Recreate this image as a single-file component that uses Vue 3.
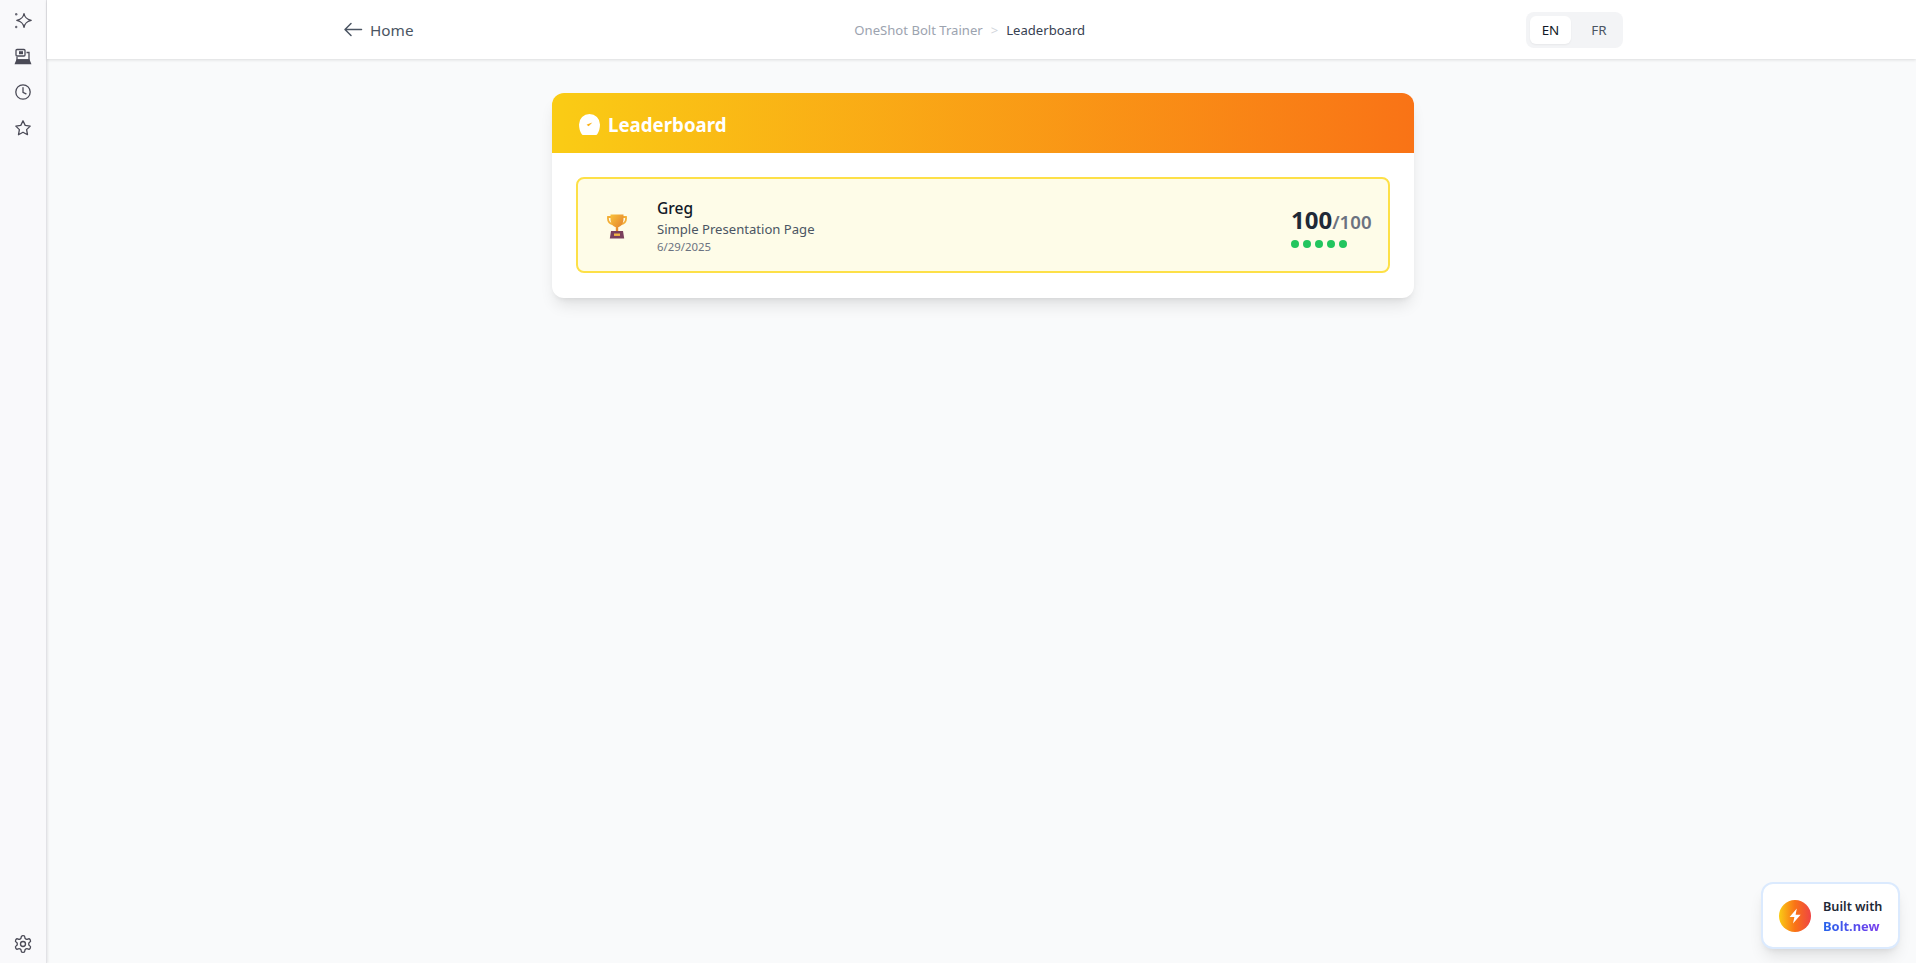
<template>
  <div class="page">
    <aside class="sidebar">
      <div class="side-top">
        <svg class="side-icon" viewBox="0 0 20 20" fill="none" stroke="#4b4b57" stroke-width="1.3" stroke-linejoin="round">
          <path d="M11 2.6 C11.8 6.6 13.4 8.2 18.2 9.4 C13.4 10.6 11.8 12.2 11 16.4 C10.2 12.2 8.6 10.6 3.8 9.4 C8.6 8.2 10.2 6.6 11 2.6Z" />
          <circle cx="3.2" cy="3.2" r="1.2" fill="#6b6b76" stroke="none" />
          <circle cx="3.2" cy="16" r="1.2" fill="#6b6b76" stroke="none" />
        </svg>
        <svg class="side-icon" viewBox="0 0 20 20" fill="none" stroke="#4b4b57" stroke-width="1.3">
          <rect x="3" y="2.5" width="9" height="6.5" rx="1" />
          <rect x="6" y="4.2" width="4" height="3" fill="#4b4b57" stroke="none" />
          <path d="M13.5 5.5H16V13H4V10" />
          <path d="M2.5 16.5L4 13H16L17.5 16.5Z" fill="#4b4b57" />
        </svg>
        <svg class="side-icon" viewBox="0 0 20 20" fill="none" stroke="#4b4b57" stroke-width="1.3" stroke-linecap="round">
          <circle cx="10" cy="10" r="7.2" />
          <path d="M10 5.6V10.4L13 11.8" />
        </svg>
        <svg class="side-icon" viewBox="0 0 20 20" fill="none" stroke="#4b4b57" stroke-width="1.3" stroke-linejoin="round">
          <path d="M10 2.8L12.2 7.4L17.2 8.1L13.6 11.6L14.5 16.7L10 14.2L5.5 16.7L6.4 11.6L2.8 8.1L7.8 7.4Z" />
        </svg>
      </div>
      <svg class="side-icon" viewBox="0 0 24 24" fill="none" stroke="#4b4b57" stroke-width="1.6" stroke-linejoin="round">
        <path d="M12.22 2h-.44a2 2 0 0 0-2 2v.18a2 2 0 0 1-1 1.73l-.43.25a2 2 0 0 1-2 0l-.15-.08a2 2 0 0 0-2.73.73l-.22.38a2 2 0 0 0 .73 2.73l.15.1a2 2 0 0 1 1 1.72v.51a2 2 0 0 1-1 1.74l-.15.09a2 2 0 0 0-.73 2.73l.22.38a2 2 0 0 0 2.73.73l.15-.08a2 2 0 0 1 2 0l.43.25a2 2 0 0 1 1 1.73V20a2 2 0 0 0 2 2h.44a2 2 0 0 0 2-2v-.18a2 2 0 0 1 1-1.73l.43-.25a2 2 0 0 1 2 0l.15.08a2 2 0 0 0 2.73-.73l.22-.39a2 2 0 0 0-.73-2.73l-.15-.08a2 2 0 0 1-1-1.74v-.5a2 2 0 0 1 1-1.74l.15-.09a2 2 0 0 0 .73-2.73l-.22-.38a2 2 0 0 0-2.73-.73l-.15.08a2 2 0 0 1-2 0l-.43-.25a2 2 0 0 1-1-1.73V4a2 2 0 0 0-2-2z" />
        <circle cx="12" cy="12" r="3" />
      </svg>
    </aside>

    <div class="main">
      <header class="topbar">
        <div class="topbar-inner">
          <a class="home">
            <svg class="arrow" viewBox="0 0 20 20" fill="none" stroke="#4b5563" stroke-width="1.5" stroke-linecap="round" stroke-linejoin="round">
              <path d="M8 3.5L2 9.5L8 15.5M2.5 9.5H18.5" />
            </svg>
            <span>Home</span>
          </a>
          <nav class="crumbs">
            <span class="crumb-muted">OneShot Bolt Trainer</span>
            <span class="crumb-sep">&gt;</span>
            <span class="crumb-current">Leaderboard</span>
          </nav>
          <div class="lang">
            <button class="lang-btn active">EN</button>
            <button class="lang-btn">FR</button>
          </div>
        </div>
      </header>

      <main class="content">
        <section class="card">
          <div class="card-head">
            <svg class="head-icon" viewBox="0 0 21 21">
              <path d="M10.5 0A10.5 10.5 0 0 1 21 10.5C21 14 20 17.6 18.4 20A2 2 0 0 1 17 21H4A2 2 0 0 1 2.6 20C1 17.6 0 14 0 10.5A10.5 10.5 0 0 1 10.5 0Z" fill="#fff" />
              <path d="M7.6 10.8L9.6 12.2L13.4 8.4L9.2 10Z" fill="#fbb016" />
            </svg>
            <h2>Leaderboard</h2>
          </div>
          <div class="card-body">
            <div v-for="e in entries" :key="e.name" class="entry">
              <div class="entry-left">
                <svg class="trophy" viewBox="0 0 20 25">
                  <defs>
                    <linearGradient id="cup" x1="0" y1="0" x2="1" y2="1">
                      <stop offset="0" stop-color="#f9c23c" />
                      <stop offset="1" stop-color="#e0782a" />
                    </linearGradient>
                  </defs>
                  <path d="M4 3H1C0.6 6.5 2 9.5 6 10.5M16 3H19C19.4 6.5 18 9.5 14 10.5" fill="none" stroke="#f3ae36" stroke-width="1.8" />
                  <path d="M3.5 0.5H16.5V5C16.5 9.5 14 12.5 11.2 13.2V17H8.8V13.2C6 12.5 3.5 9.5 3.5 5Z" fill="url(#cup)" />
                  <path d="M4 17H16L17.2 24.5H2.8Z" fill="#7b3f5c" />
                  <rect x="7" y="19.5" width="6" height="2.4" fill="#f4b544" />
                </svg>
                <div class="entry-text">
                  <div class="entry-name">{{ e.name }}</div>
                  <div class="entry-title">{{ e.title }}</div>
                  <div class="entry-date">{{ e.date }}</div>
                </div>
              </div>
              <div class="entry-score">
                <div class="score"><span class="score-num">{{ e.score }}</span><span class="score-max">/100</span></div>
                <div class="dots">
                  <span v-for="n in 5" :key="n" class="dot"></span>
                </div>
              </div>
            </div>
          </div>
        </section>
      </main>
    </div>

    <div class="bolt-badge">
      <span class="bolt-logo">
        <svg viewBox="0 0 20 20" width="20" height="20">
          <path d="M11.8 2.4L4.6 11H9.4L8 17.6L15.6 8.8H10.6Z" fill="#fff" />
        </svg>
      </span>
      <div class="bolt-text">
        <div class="bolt-line">Built with</div>
        <div class="bolt-name">Bolt.new</div>
      </div>
    </div>
  </div>
</template>

<script setup>
const entries = [
  { name: 'Greg', title: 'Simple Presentation Page', date: '6/29/2025', score: 100 }
]
</script>

<style>
html, body {
  margin: 0;
  background: #f9fafb;
}
</style>

<style scoped>
.page {
  display: flex;
  height: 963px;
  overflow: hidden;
  background: #f9fafb;
  font-family: "Noto Sans", "Open Sans", sans-serif;
  color: #111827;
}
.sidebar {
  width: 47px;
  flex-shrink: 0;
  box-sizing: border-box;
  border-right: 1px solid #e2e2e6;
  box-shadow: 1px 0 2px rgba(0, 0, 0, 0.08);
  background: #f9f9fb;
  display: flex;
  flex-direction: column;
  justify-content: space-between;
  align-items: center;
  padding: 11px 0 9px;
}
.side-top {
  display: flex;
  flex-direction: column;
  gap: 15.5px;
}
.side-icon {
  width: 20px;
  height: 20px;
  display: block;
}
.main {
  flex: 1;
  min-width: 0;
}
.topbar {
  height: 59px;
  padding-left: 3px;
  background: #fff;
  box-shadow: 0 1px 3px rgba(0, 0, 0, 0.12);
}
.topbar-inner {
  width: 1280px;
  height: 59px;
  margin: 0 auto;
  display: flex;
  justify-content: space-between;
  align-items: center;
}
.home {
  display: flex;
  align-items: center;
  gap: 7px;
  font-size: 15.3px;
  color: #4b5563;
}
.arrow {
  width: 20px;
  height: 20px;
}
.crumbs {
  display: flex;
  align-items: center;
  gap: 8px;
  font-size: 13.1px;
}
.crumb-muted { color: #9ca3af; }
.crumb-sep { color: #d1d5db; }
.crumb-current { color: #374151; }
.lang {
  display: flex;
  gap: 8px;
  padding: 4px;
  background: #f3f4f6;
  border-radius: 8px;
}
.lang-btn {
  width: 40px;
  height: 28px;
  padding: 0;
  border: none;
  border-radius: 6px;
  background: transparent;
  font: inherit;
  font-size: 13.4px;
  color: #4b5563;
}
.lang-btn.active {
  width: 41px;
  background: #fff;
  color: #111827;
  box-shadow: 0 1px 2px rgba(0, 0, 0, 0.05);
}
.content {
  padding: 34px 0 0 3px;
}
.card {
  width: 862px;
  margin: 0 auto;
  background: #fff;
  border-radius: 12px;
  box-shadow: 0 10px 15px -3px rgba(0, 0, 0, 0.1), 0 4px 6px -4px rgba(0, 0, 0, 0.1);
  overflow: hidden;
}
.card-head {
  height: 60px;
  box-sizing: border-box;
  display: flex;
  align-items: center;
  gap: 8px;
  padding: 3px 27px 0;
  background: linear-gradient(to right, #facc15, #f97316);
}
.card-head h2 {
  margin: 0;
  font-size: 18.7px;
  font-weight: 700;
  color: #fff;
}
.head-icon {
  width: 21px;
  height: 21px;
}
.card-body {
  padding: 24px 24px 25px;
}
.entry {
  height: 96px;
  box-sizing: border-box;
  border: 2px solid #fde047;
  border-radius: 8px;
  background: #fefce8;
  display: flex;
  align-items: center;
  justify-content: space-between;
  padding: 0 16px;
}
.entry-left {
  display: flex;
  align-items: center;
  gap: 30px;
}
.trophy {
  width: 20px;
  height: 25px;
  margin: 2px 0 0 13px;
}
.entry-name {
  font-size: 15.5px;
  font-weight: 500;
  line-height: 23px;
  color: #111827;
}
.entry-title {
  font-size: 13.1px;
  line-height: 19px;
  color: #4b5563;
}
.entry-date {
  font-size: 11.4px;
  line-height: 15px;
  color: #6b7280;
}
.entry-score {
  width: 81px;
  padding-top: 2px;
}
.score {
  line-height: 30px;
  margin-bottom: 2px;
}
.score-num {
  font-size: 24px;
  font-weight: 700;
  color: #1f2937;
}
.score-max {
  font-size: 18.6px;
  font-weight: 600;
  color: #6b7280;
}
.dots {
  display: flex;
  gap: 4px;
}
.dot {
  width: 8px;
  height: 8px;
  border-radius: 50%;
  background: #22c55e;
}
.bolt-badge {
  position: absolute;
  right: 16px;
  bottom: 14px;
  width: 139px;
  height: 67px;
  box-sizing: border-box;
  background: #fff;
  border: 2px solid #dbeafe;
  border-radius: 12px;
  box-shadow: 0 10px 15px -3px rgba(0, 0, 0, 0.1), 0 4px 6px -4px rgba(0, 0, 0, 0.1);
  display: flex;
  align-items: center;
  gap: 12px;
  padding-left: 16px;
}
.bolt-logo {
  width: 32px;
  height: 32px;
  border-radius: 50%;
  background: linear-gradient(to right, #facc15, #f97316 50%, #ef4444);
  display: flex;
  align-items: center;
  justify-content: center;
}
.bolt-line {
  font-size: 12.7px;
  font-weight: 600;
  line-height: 20px;
  color: #1f2937;
}
.bolt-name {
  font-size: 12.9px;
  font-weight: 700;
  line-height: 20px;
  background: linear-gradient(to right, #2563eb, #7c3aed);
  -webkit-background-clip: text;
  background-clip: text;
  color: transparent;
}
</style>
